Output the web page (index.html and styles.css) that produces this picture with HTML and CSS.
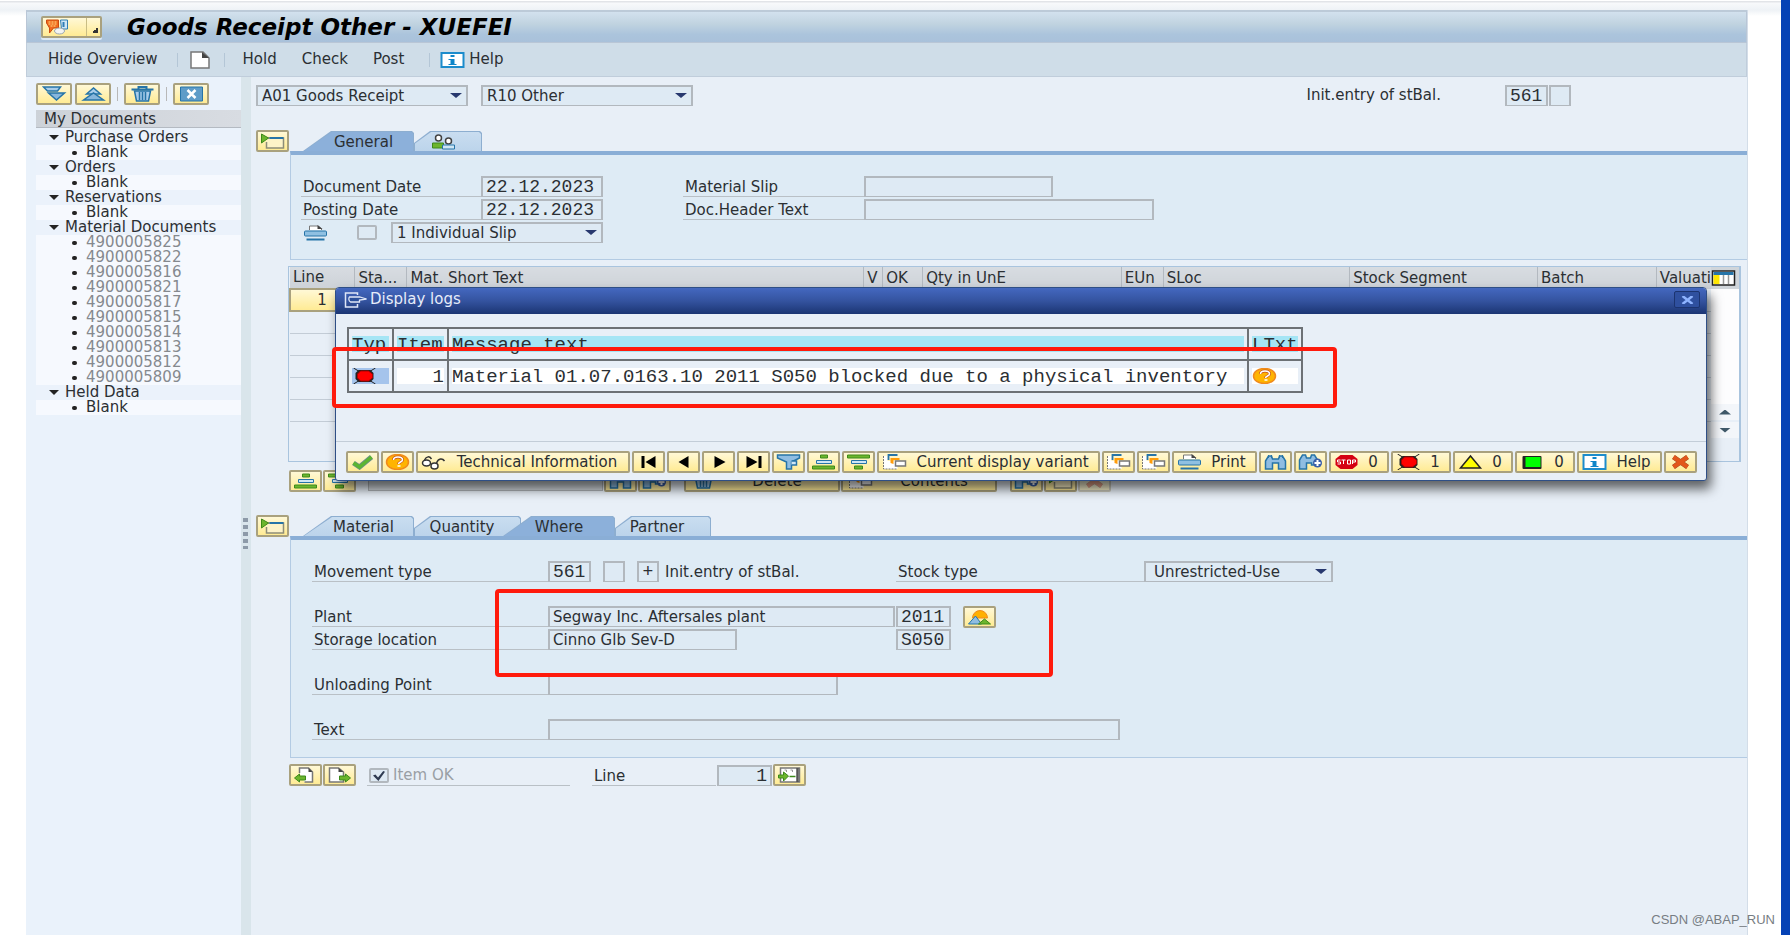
FILE: index.html
```html
<!DOCTYPE html>
<html lang="en">
<head>
    <meta charset="UTF-8">
    <meta name="viewport" content="width=device-width, initial-scale=1.0">
    <title>Goods Receipt Other - XUEFEI</title>
    <link rel="stylesheet" href="styles.css">
</head>
<body>
    <!-- Icon set -->
    <svg class="sprite" aria-hidden="true">
        <symbol id="i-menu" viewBox="0 0 24 16"><path d="M1 1h12v8H8l-4 5V9L1 4z" fill="#f26a1b" stroke="#c94a10"/><path d="M3 3h8M3 5h8M5 7h6" fill="none" stroke="#ffe08a" stroke-dasharray="2 1"/><path d="M15 1h7v9h-6z" fill="#cfe6f5" stroke="#2f7db5"/><path d="M18 3v5" stroke="#2f7db5" stroke-width="2"/><ellipse cx="14" cy="12" rx="5" ry="3" fill="#f3f3f3" stroke="#9aa7b2"/></symbol>
        <symbol id="i-page" viewBox="0 0 20 18"><path d="M1 1h12l6 6v10H1z" fill="#fff" stroke="#777" stroke-width="1.500"/><path d="M12 1l7 6h-7z" fill="#444"/></symbol>
        <symbol id="i-info" viewBox="0 0 24 16"><path d="M1 1h22v14H1z" fill="#fff" stroke="#1c8ccc" stroke-width="2"/><path d="M10 3h4v2h-4zM8 7h6v5h2v1H8v-1h2V8H8z" fill="#0d85c9"/></symbol>
        <symbol id="i-down" viewBox="0 0 24 16"><path d="M1 1h17l-3 4H5z" fill="#a9cdea" stroke="#2674a8" stroke-width="1.500"/><path d="M6 7h16l-8 7z" fill="#86b6dc" stroke="#2674a8" stroke-width="1.500"/></symbol>
        <symbol id="i-up" viewBox="0 0 24 16"><path d="M5 8l7-6 7 6z" fill="#a9cdea" stroke="#2674a8" stroke-width="1.500"/><path d="M2 14l10-7 10 7z" fill="#86b6dc" stroke="#2674a8" stroke-width="1.500"/></symbol>
        <symbol id="i-trash" viewBox="0 0 24 16"><path d="M8 3V1h8v2M1 3.500h22" fill="none" stroke="#2674a8" stroke-width="2"/><path d="M4 5h16l-2 10H6z" fill="#a9cdea" stroke="#2674a8" stroke-width="1.500"/><path d="M9 6v8M12 6v8M15 6v8" stroke="#2674a8" stroke-width="1.500"/></symbol>
        <symbol id="i-closebox" viewBox="0 0 24 16"><path d="M1 1h22v14H1z" fill="#5e9cc8" stroke="#2674a8"/><path d="M8 4l8 8M16 4l-8 8" stroke="#fff" stroke-width="2.500"/></symbol>
        <symbol id="i-detail" viewBox="0 0 24 16"><path d="M7 5h16v10H6V9" fill="#fdf3c8" stroke="#8d8d78" stroke-width="1.500"/><path d="M9 5h14" stroke="#2674a8" stroke-width="2"/><path d="M1 1l7 4-7 5z" fill="#6cb52d" stroke="#3c8a1a"/></symbol>
        <symbol id="i-people" viewBox="0 0 24 16"><circle cx="7" cy="4" r="3" fill="#fff" stroke="#444" stroke-width="1.500"/><path d="M1 14V9h11v5z" fill="#6cb52d" stroke="#3c8a1a"/><circle cx="17" cy="7" r="3" fill="#fff" stroke="#444" stroke-width="1.500"/><path d="M11 15v-4h12v4z" fill="#cfe6f5" stroke="#2674a8"/></symbol>
        <symbol id="i-print" viewBox="0 0 24 16"><path d="M6 5V1h9l3 3v1" fill="#fff" stroke="#777"/><path d="M14 0l5 4h-5z" fill="#444"/><rect x="1" y="6" width="22" height="5" rx="1" fill="#8fc0e2" stroke="#2674a8"/><path d="M3 14.500h18" stroke="#2674a8" stroke-width="2"/></symbol>
        <symbol id="i-check" viewBox="0 0 24 16"><path d="M3 9l6 4L21 3" fill="none" stroke="#6b8f8a" stroke-width="5"/><path d="M3 9l6 4L21 3" fill="none" stroke="#5cb531" stroke-width="3.500"/></symbol>
        <symbol id="i-help" viewBox="0 0 24 16"><ellipse cx="12" cy="8" rx="11" ry="7.500" fill="#ffb400" stroke="#f08a1c" stroke-width="1.500"/><path d="M8 6c0-4 9-4 9 0 0 2-4 2-4 4" fill="none" stroke="#c9541c" stroke-width="3"/><path d="M8 6c0-4 9-4 9 0 0 2-4 2-4 4M12 12h3" fill="none" stroke="#fff" stroke-width="1.500"/></symbol>
        <symbol id="i-glasses" viewBox="0 0 24 16"><ellipse cx="5" cy="9" rx="4" ry="3" fill="#fff" stroke="#333" stroke-width="1.500"/><ellipse cx="13" cy="12" rx="3.500" ry="3" fill="#fff" stroke="#333" stroke-width="1.500"/><path d="M3 6c2-4 5-4 7-1M15 9c2-5 6-5 8-2" fill="none" stroke="#333" stroke-width="1.500"/></symbol>
        <symbol id="i-first" viewBox="0 0 24 16"><path d="M5 2h3v12H5zM19 2v12L9 8z"/></symbol>
        <symbol id="i-prev" viewBox="0 0 24 16"><path d="M17 2v12L7 8z"/></symbol>
        <symbol id="i-next" viewBox="0 0 24 16"><path d="M8 2v12l11-6z"/></symbol>
        <symbol id="i-last" viewBox="0 0 24 16"><path d="M17 2h3v12h-3zM5 2v12l11-6z"/></symbol>
        <symbol id="i-filter" viewBox="0 0 24 16"><path d="M1 1h22v3l-8 4v7h-5V8L1 4z" fill="#8fbde2" stroke="#2674a8" stroke-width="1.500"/><path d="M15 7h5v4h-5" fill="#cfe6f5" stroke="#2674a8" stroke-width="1.500"/></symbol>
        <symbol id="i-asc" viewBox="0 0 24 16"><path d="M9 1h7v3H9z" fill="#6cb52d" stroke="#3c8a1a"/><path d="M5 6.500h15v3H5z" fill="#cfe6f5" stroke="#2674a8"/><path d="M1 12h22v3H1z" fill="#6cb52d" stroke="#3c8a1a"/></symbol>
        <symbol id="i-desc" viewBox="0 0 24 16"><path d="M1 1h22v3H1z" fill="#6cb52d" stroke="#3c8a1a"/><path d="M5 6.500h15v3H5z" fill="#cfe6f5" stroke="#2674a8"/><path d="M8 12h8v3H8z" fill="#6cb52d" stroke="#3c8a1a"/></symbol>
        <symbol id="i-variant" viewBox="0 0 24 16"><path d="M1 2v13h14V7H5V2z" fill="#fff"/><path d="M1 2v13h14" fill="none" stroke="#777" stroke-dasharray="2 1"/><path d="M6 6V1h9" fill="none" stroke="#2674a8" stroke-width="1.800"/><path d="M8 9V4h9v2h-6v4z" fill="#ff9c0a"/><path d="M13 7h10v5H13z" fill="#fff" stroke="#777" stroke-width="1.500"/></symbol>
        <symbol id="i-find" viewBox="0 0 24 16"><path d="M2 15V7l3-5h3l1 3h6l1-3h3l3 5v8h-7V9H9v6z" fill="#8fbde2" stroke="#2674a8" stroke-width="1.500"/><path d="M5 1v3M8 1v3M16 1v3M19 1v3" stroke="#2674a8"/></symbol>
        <symbol id="i-findnext" viewBox="0 0 24 16"><path d="M1 15V6l3-5h3l1 3h4l1-3h3l3 5v5h-6V9H8v6z" fill="#8fbde2" stroke="#2674a8" stroke-width="1.500"/><circle cx="19" cy="9" r="4.500" fill="#3b5fa8"/><path d="M19 6v6M16 9h6" stroke="#fff" stroke-width="2"/></symbol>
        <symbol id="i-stop" viewBox="0 0 24 16"><path d="M6 1h12l5 4v6l-5 4H6l-5-4V5z" fill="#d50012"/><path d="M6 6H3v2h3v2H3M7 6h4M9 6v4M13 6h3v4h-3zM18 10V6h3v2h-3" fill="none" stroke="#fff"/></symbol>
        <symbol id="i-error" viewBox="0 0 24 16"><path d="M1 0l5 3M23 0l-5 3M1 16l5-3M23 16l-5-3" stroke="#222"/><path d="M6 2h12l3 3v6l-3 3H6l-3-3V5z" fill="#222"/><path d="M8 3h8l4 3v4l-4 3H8l-3-3V6z" fill="#f00" stroke="#a00"/></symbol>
        <symbol id="i-warn" viewBox="0 0 24 16"><path d="M12 2l10 12H2z" fill="#ff0" stroke="#222" stroke-width="1.500"/></symbol>
        <symbol id="i-ok" viewBox="0 0 24 16"><rect x="2" y="2" width="19" height="13" rx="1" fill="#222"/><path d="M5 3h15v10H5z" fill="#0f0"/></symbol>
        <symbol id="i-cancel" viewBox="0 0 24 16"><path d="M5 3l14 10M19 3L5 13" stroke="#9a4a28" stroke-width="5"/><path d="M5 3l14 10M19 3L5 13" stroke="#e2561b" stroke-width="4"/></symbol>
        <symbol id="i-exit" viewBox="0 0 24 16"><path d="M14 3V1H2v14h12v-3" fill="none" stroke="#dfe6f7" stroke-width="1.500"/><path d="M6 5h10l7 2-7 1v2H7c-2-1-2-4-1-5z" fill="#2b4f9b" stroke="#dfe6f7" stroke-width="1.300"/></symbol>
        <symbol id="i-columns" viewBox="0 0 24 16"><path d="M1 1h22v14H1z" fill="#fff" stroke="#222" stroke-width="1.500"/><path d="M2 2h20v3H2z" fill="#2674a8"/><path d="M2 5h6v9H2z" fill="#ffe600"/><path d="M12 5v9M17 5v9" stroke="#999" stroke-width="1.500"/></symbol>
        <symbol id="i-plant" viewBox="0 0 24 16"><path d="M5 9a7 7 0 0 1 15 0z" fill="#ffb000" stroke="#f08a1c"/><path d="M1 15l7-8 6 8z" fill="#8fbde2" stroke="#2674a8"/><path d="M11 15l6-5 6 5z" fill="#6cb52d" stroke="#3c8a1a"/></symbol>
        <symbol id="i-pageprev" viewBox="0 0 24 16"><path d="M6 6V1h9l4 4v10h-8" fill="#fff" stroke="#777" stroke-width="1.500"/><path d="M15 1l4 4h-4z" fill="#444"/><path d="M1 11l5-4v2h6v4H6v2z" fill="#6cb52d" stroke="#3c8a1a"/></symbol>
        <symbol id="i-pagenext" viewBox="0 0 24 16"><path d="M2 1h9l5 4v10H2z" fill="#fff" stroke="#777" stroke-width="1.500"/><path d="M11 1l5 4h-5z" fill="#444"/><path d="M23 11l-5-4v2h-6v4h6v2z" fill="#6cb52d" stroke="#3c8a1a"/></symbol>
        <symbol id="i-goto" viewBox="0 0 24 16"><path d="M3 1h19v14H3z" fill="#fff" stroke="#777" stroke-width="1.500"/><path d="M20 1v14" stroke="#555" stroke-width="2.500"/><path d="M7 3h2v2M13 3h2v2" fill="none" stroke="#999"/><path d="M12 9.500h6" stroke="#3c8a1a" stroke-width="1.500"/><path d="M1 8h5V5l5 4-5 5v-3H1z" fill="#6cb52d" stroke="#3c8a1a"/></symbol>
    </svg>

    <div class="page">
        <main class="window">
            <header class="titlebar">
                <button class="btn menu-btn" aria-label="Menu"><svg class="ico"><use href="#i-menu"/></svg><span class="corner"></span></button>
                <h1>Goods Receipt Other - XUEFEI</h1>
            </header>

            <nav class="menubar">
                <button class="menu-item">Hide Overview</button>
                <span class="sep"></span>
                <button class="menu-item new" aria-label="New"><svg class="ico-page"><use href="#i-page"/></svg></button>
                <span class="sep"></span>
                <button class="menu-item hold">Hold</button>
                <button class="menu-item">Check</button>
                <button class="menu-item">Post</button>
                <span class="sep"></span>
                <button class="menu-item help"><svg class="ico"><use href="#i-info"/></svg>Help</button>
            </nav>

            <div class="workspace">
                <!-- Document tree -->
                <aside class="overview">
                    <div class="tree-tools">
                        <button class="btn" aria-label="Expand"><svg class="ico"><use href="#i-down"/></svg></button>
                        <button class="btn" aria-label="Collapse"><svg class="ico"><use href="#i-up"/></svg></button>
                        <span class="sep"></span>
                        <button class="btn" aria-label="Delete"><svg class="ico"><use href="#i-trash"/></svg></button>
                        <span class="sep"></span>
                        <button class="btn" aria-label="Close"><svg class="ico"><use href="#i-closebox"/></svg></button>
                    </div>
                    <h2>My Documents</h2>
                    <ul class="tree">
                        <li class="node">Purchase Orders</li>
                        <li>Blank</li>
                        <li class="node">Orders</li>
                        <li>Blank</li>
                        <li class="node">Reservations</li>
                        <li>Blank</li>
                        <li class="node">Material Documents</li>
                        <li class="doc">4900005825</li>
                        <li class="doc">4900005822</li>
                        <li class="doc">4900005816</li>
                        <li class="doc">4900005821</li>
                        <li class="doc">4900005817</li>
                        <li class="doc">4900005815</li>
                        <li class="doc">4900005814</li>
                        <li class="doc">4900005813</li>
                        <li class="doc">4900005812</li>
                        <li class="doc">4900005809</li>
                        <li class="node">Held Data</li>
                        <li>Blank</li>
                    </ul>
                </aside>
                <div class="splitter"><span class="grip"></span></div>

                <section class="content">
                    <div class="top-row">
                        <span class="drop"><select aria-label="Action"><option>A01 Goods Receipt</option></select></span>
                        <span class="drop"><select aria-label="Reference"><option>R10 Other</option></select></span>
                        <div class="mvt">
                            <label for="mvt">Init.entry of stBal.</label>
                            <input id="mvt" class="w3" value="561">
                            <input class="w1" aria-label="Special stock">
                        </div>
                    </div>

                    <div class="tab-row">
                        <button class="btn" aria-label="Close header data"><svg class="ico"><use href="#i-detail"/></svg></button>
                        <div class="tabs">
                            <button class="tab first active">General</button>
                            <button class="tab icon-tab" aria-label="Partner info"><svg class="ico"><use href="#i-people"/></svg></button>
                        </div>
                    </div>
                    <div class="panel head-panel">
                        <label class="lbl" for="docdate">Document Date</label>
                        <input id="docdate" value="22.12.2023">
                        <label class="lbl second" for="slip">Material Slip</label>
                        <input id="slip" class="w-slip">
                        <label class="lbl" for="postdate">Posting Date</label>
                        <input id="postdate" value="22.12.2023">
                        <label class="lbl second" for="headtext">Doc.Header Text</label>
                        <input id="headtext" class="w-head">
                        <div class="print-row">
                            <svg class="ico"><use href="#i-print"/></svg>
                            <input type="checkbox" aria-label="Print slip">
                            <span class="drop"><select aria-label="Slip type"><option>1 Individual Slip</option></select></span>
                        </div>
                    </div>

                    <div class="items">
                        <table class="item-table">
                            <colgroup>
                                <col class="c-line"><col class="c-sta"><col class="c-mat"><col class="c-v"><col class="c-ok"><col class="c-qty"><col class="c-eun"><col class="c-sloc"><col class="c-seg"><col class="c-batch"><col>
                            </colgroup>
                            <thead>
                                <tr><th>Line</th><th>Sta...</th><th>Mat. Short Text</th><th>V</th><th>OK</th><th>Qty in UnE</th><th>EUn</th><th>SLoc</th><th>Stock Segment</th><th>Batch</th><th>Valuati</th></tr>
                            </thead>
                            <tbody>
                                <tr><td class="current">1</td><td></td><td></td><td></td><td></td><td></td><td></td><td></td><td></td><td></td><td></td></tr>
                                <tr><td colspan="11"></td></tr>
                                <tr><td colspan="11"></td></tr>
                                <tr><td colspan="11"></td></tr>
                                <tr><td colspan="11"></td></tr>
                                <tr><td colspan="11"></td></tr>
                            </tbody>
                        </table>
                        <div class="scroller">
                            <button class="cfg" aria-label="Configure columns"><svg class="ico"><use href="#i-columns"/></svg></button>
                            <div class="track"></div>
                            <button class="arrow up" aria-label="Scroll up"></button>
                            <button class="arrow down" aria-label="Scroll down"></button>
                        </div>
                    </div>

                    <div class="item-tools">
                        <button class="btn" aria-label="Sort ascending"><svg class="ico"><use href="#i-asc"/></svg></button>
                        <button class="btn" aria-label="Sort descending"><svg class="ico"><use href="#i-desc"/></svg></button>
                        <div class="hscroll"></div>
                        <button class="btn" aria-label="Find"><svg class="ico"><use href="#i-find"/></svg></button>
                        <button class="btn" aria-label="Find next"><svg class="ico"><use href="#i-findnext"/></svg></button>
                        <button class="btn wide group"><svg class="ico"><use href="#i-trash"/></svg><span>Delete</span></button>
                        <button class="btn wide"><svg class="ico"><use href="#i-variant"/></svg><span>Contents</span></button>
                        <button class="btn group" aria-label="Distribute"><svg class="ico"><use href="#i-findnext"/></svg></button>
                        <button class="btn" aria-label="Split"><svg class="ico"><use href="#i-detail"/></svg></button>
                        <button class="btn" aria-label="Batch" disabled><svg class="ico"><use href="#i-cancel"/></svg></button>
                    </div>

                    <div class="tab-row lower">
                        <button class="btn" aria-label="Close item detail"><svg class="ico"><use href="#i-detail"/></svg></button>
                        <div class="tabs">
                            <button class="tab first">Material</button>
                            <button class="tab quantity">Quantity</button>
                            <button class="tab where active">Where</button>
                            <button class="tab partner">Partner</button>
                        </div>
                    </div>
                    <div class="panel detail-panel">
                        <label class="lbl" for="mtype">Movement type</label>
                        <div class="cell spaced"><input id="mtype" class="w3" value="561"><input class="w1" aria-label="Special stock indicator"><input class="w1 plus" aria-label="Sign" value="+"><span class="mtext">Init.entry of stBal.</span></div>
                        <label class="lbl" for="stock">Stock type</label>
                        <span class="drop stock"><select id="stock"><option>Unrestricted-Use</option></select></span>

                        <label class="lbl r3" for="plant">Plant</label>
                        <div class="cell r3"><input id="plant" class="text w-plant" value="Segway Inc. Aftersales plant"></div>
                        <div class="cell r3"><input class="w4" aria-label="Plant code" value="2011"><button class="btn plant-btn" aria-label="Plant details"><svg class="ico"><use href="#i-plant"/></svg></button></div>

                        <label class="lbl r4" for="sloc">Storage location</label>
                        <div class="cell r4"><input id="sloc" class="text w-slip" value="Cinno Glb Sev-D"></div>
                        <div class="cell r4"><input class="w4" aria-label="Storage location code" value="S050"></div>

                        <label class="lbl r5" for="unload">Unloading Point</label>
                        <div class="cell r5"><input id="unload" class="w-head"></div>

                        <label class="lbl r6" for="text">Text</label>
                        <div class="cell long r6"><input id="text" class="w-text"></div>
                        <div class="mark mark-plant"></div>
                    </div>

                    <div class="line-bar">
                        <button class="btn" aria-label="Previous item"><svg class="ico"><use href="#i-pageprev"/></svg></button>
                        <button class="btn" aria-label="Next item"><svg class="ico"><use href="#i-pagenext"/></svg></button>
                        <label class="lbl item-ok"><input type="checkbox" checked disabled>Item OK</label>
                        <label class="lbl line-lbl" for="line">Line</label>
                        <input id="line" class="w4 num" value="1">
                        <button class="btn" aria-label="Go to line"><svg class="ico"><use href="#i-goto"/></svg></button>
                    </div>
                </section>
            </div>

            <!-- Log popup -->
            <section class="dialog" role="dialog" aria-labelledby="dlg-title">
                <header class="dialog-title">
                    <svg class="ico"><use href="#i-exit"/></svg>
                    <h2 id="dlg-title">Display logs</h2>
                    <button class="dialog-close" aria-label="Close"><svg viewBox="0 0 12 8"><path d="M1 0l10 8M11 0L1 8" stroke="#8fb4ff" stroke-width="2.500"/></svg></button>
                </header>
                <div class="dialog-body">
                    <table class="log">
                        <colgroup><col class="l-typ"><col class="l-item"><col class="l-msg"><col class="l-txt"></colgroup>
                        <thead>
                            <tr><th><span>Typ</span></th><th><span>Item</span></th><th><span>Message text</span></th><th><span>LTxt</span></th></tr>
                        </thead>
                        <tbody>
                            <tr>
                                <td><span class="err"><svg class="ico"><use href="#i-error"/></svg></span></td>
                                <td class="num"><span>1</span></td>
                                <td><span>Material 01.07.0163.10 2011 S050 blocked due to a physical inventory</span></td>
                                <td><span><svg class="ico"><use href="#i-help"/></svg></span></td>
                            </tr>
                        </tbody>
                    </table>
                </div>
                <footer class="dialog-tools">
                    <button class="btn" aria-label="Continue"><svg class="ico"><use href="#i-check"/></svg></button>
                    <button class="btn" aria-label="Long text"><svg class="ico"><use href="#i-help"/></svg></button>
                    <button class="btn tech"><svg class="ico"><use href="#i-glasses"/></svg><span>Technical Information</span></button>
                    <button class="btn" aria-label="First"><svg class="ico"><use href="#i-first"/></svg></button>
                    <button class="btn" aria-label="Previous"><svg class="ico"><use href="#i-prev"/></svg></button>
                    <button class="btn" aria-label="Next"><svg class="ico"><use href="#i-next"/></svg></button>
                    <button class="btn" aria-label="Last"><svg class="ico"><use href="#i-last"/></svg></button>
                    <button class="btn" aria-label="Filter"><svg class="ico"><use href="#i-filter"/></svg></button>
                    <button class="btn" aria-label="Sort ascending"><svg class="ico"><use href="#i-asc"/></svg></button>
                    <button class="btn" aria-label="Sort descending"><svg class="ico"><use href="#i-desc"/></svg></button>
                    <button class="btn variant"><svg class="ico"><use href="#i-variant"/></svg><span>Current display variant</span></button>
                    <button class="btn" aria-label="Select variant"><svg class="ico"><use href="#i-variant"/></svg></button>
                    <button class="btn" aria-label="Save variant"><svg class="ico"><use href="#i-variant"/></svg></button>
                    <button class="btn labelled"><svg class="ico"><use href="#i-print"/></svg><span>Print</span></button>
                    <button class="btn" aria-label="Find"><svg class="ico"><use href="#i-find"/></svg></button>
                    <button class="btn" aria-label="Find next"><svg class="ico"><use href="#i-findnext"/></svg></button>
                    <button class="btn count"><svg class="ico"><use href="#i-stop"/></svg><span>0</span></button>
                    <button class="btn count"><svg class="ico"><use href="#i-error"/></svg><span>1</span></button>
                    <button class="btn count"><svg class="ico"><use href="#i-warn"/></svg><span>0</span></button>
                    <button class="btn count"><svg class="ico"><use href="#i-ok"/></svg><span>0</span></button>
                    <button class="btn labelled"><svg class="ico"><use href="#i-info"/></svg><span>Help</span></button>
                    <button class="btn" aria-label="Cancel"><svg class="ico"><use href="#i-cancel"/></svg></button>
                </footer>
                <div class="mark mark-log"></div>
            </section>
        </main>
        <div class="watermark">CSDN @ABAP_RUN</div>
    </div>
</body>
</html>
```
FILE: styles.css
```css
* {
    box-sizing: border-box;
}

body {
    margin: 0;
    background: #fff;
    font-family: "DejaVu Sans", Verdana, sans-serif;
    font-size: 15px;
    line-height: 15px;
    color: #2b2f33;
}

h1, h2, ul {
    margin: 0;
    padding: 0;
    font-size: 15px;
    font-weight: normal;
}

button, input, select {
    font: inherit;
    color: inherit;
    margin: 0;
}

.sprite {
    display: none;
}

.page {
    position: relative;
    display: flex;
    min-height: 100vh;
    padding: 10px 33px 0 26px;
    border-right: 9px solid #0542b5;
    background: linear-gradient(#fff 1px, #e2e4e8 1px, #e2e4e8 2px, #f8f9fb 3px, #eef2f6 10px, #fff 16px);
}

.window {
    position: relative;
    flex: 1;
    display: flex;
    flex-direction: column;
    background: #e8eff7;
    border-right: 1px solid #d3dde8;
    min-width: 0;
}

/* Yellow push buttons */
.btn {
    display: flex;
    align-items: center;
    justify-content: center;
    flex: none;
    width: 33px;
    height: 22px;
    padding: 0;
    border: 2px solid #a9a17e;
    border-radius: 2px;
    background: linear-gradient(#fff8d6, #ffeb94);
    white-space: nowrap;
}

.btn:disabled {
    opacity: 0.5;
}

.ico {
    width: 25px;
    height: 16px;
    flex: none;
}

.sep {
    width: 1px;
    height: 14px;
    background: #b4c6d6;
}

/* Title and menu */
.titlebar {
    display: flex;
    align-items: center;
    height: 33px;
    padding-left: 14px;
    border: 1px solid #b9c6d6;
    border-top: 2px solid #bccad8;
    background: linear-gradient(#d2e1ee, #c0d3e0 40%, #abc4dc 75%, #a9c1da);
}

.menu-btn {
    position: relative;
    width: 61px;
    justify-content: flex-start;
    padding-left: 2px;
    box-shadow: 0 2px 0 #dce8f2;
}

.menu-btn .corner {
    margin-left: auto;
    width: 14px;
    height: 18px;
    border-left: 1px solid #c9bd84;
    background: linear-gradient(135deg, transparent 50%, #333 50%) 4px 10px / 7px 5px no-repeat;
}

.titlebar h1 {
    margin-left: 25px;
    font-size: 23px;
    line-height: 26px;
    font-weight: bold;
    font-style: italic;
    color: #000;
}

.menubar {
    display: flex;
    align-items: center;
    height: 34px;
    padding-left: 21px;
    border: 1px solid #c0cddb;
    border-top: 0;
    background: #cfdde8;
}

.menu-item {
    display: flex;
    align-items: center;
    padding: 0;
    margin-right: 25px;
    border: 0;
    background: none;
}

.menu-item:first-child {
    margin-right: 19px;
}

.menu-item.new {
    margin: 0 14px 0 12px;
}

.menu-item.hold {
    margin-left: 18px;
}

.menu-item.help {
    gap: 4px;
    margin-left: 10px;
}

.ico-page {
    width: 20px;
    height: 18px;
}

.workspace {
    display: flex;
    flex: 1;
}

/* Overview tree */
.overview {
    width: 215px;
    padding: 6px 0 0 10px;
    background: #eaf2fb;
}

.tree-tools {
    display: flex;
    align-items: center;
    gap: 3px;
    margin-bottom: 5px;
}

.tree-tools .btn {
    width: 36px;
}

.tree-tools .sep {
    margin: 0 3px;
    background: #b8b8b8;
}

.overview h2 {
    height: 18px;
    padding: 2px 8px;
    border-bottom: 1px solid #b4bac2;
    background: linear-gradient(to right, #cdd2d8, #d8dce2);
}

.tree {
    list-style: none;
    padding-top: 2px;
}

.tree li {
    height: 15px;
    padding-left: 36px;
    display: flex;
    align-items: center;
    gap: 11px;
    background: #f6f9fe;
}

.tree li::before {
    content: "";
    width: 5px;
    height: 4px;
    margin-right: -2px;
    border-radius: 2px;
    background: #222;
}

.tree .node {
    padding-left: 13px;
    gap: 8px;
    background: #ebf2fb;
}

.tree .node::before {
    width: 10px;
    height: 5px;
    border-radius: 0;
    clip-path: polygon(0 0, 100% 0, 50% 100%);
}

.tree .doc {
    color: #85898e;
}

.splitter {
    width: 10px;
    padding: 441px 2px 0;
    background: #d9e5eb;
}

.grip {
    display: block;
    width: 5px;
    height: 31px;
    background: repeating-linear-gradient(#8d9aa8 0 4px, transparent 4px 7px);
}

/* Work area */
.content {
    flex: 1;
    min-width: 0;
    padding: 8px 0 0 5px;
}

input {
    height: 21px;
    padding: 0 3px;
    border: 2px solid #b2b8be;
    border-bottom-width: 1px;
    border-radius: 0;
    background: #deeaf4;
    font-family: "Liberation Mono", monospace;
    font-size: 18px;
    line-height: 18px;
    min-width: 0;
}

input.text {
    font-family: inherit;
    font-size: 15px;
}

.w1 { width: 22px; }
.w3 { width: 43px; }
.w4 { width: 55px; }
.w-slip { width: 189px; }
.w-head { width: 290px; }
.w-plant { width: 347px; }
.w-text { width: 572px; }

.num {
    text-align: right;
}

input[type="checkbox"] {
    appearance: none;
    flex: none;
    width: 20px;
    height: 15px;
    padding: 0;
    border: 2px solid #b2b8be;
    border-radius: 2px;
}

.drop {
    position: relative;
    display: block;
    width: 212px;
    height: 21px;
}

.drop select {
    appearance: none;
    width: 100%;
    height: 21px;
    padding: 0 4px;
    border: 2px solid #b2b8be;
    border-bottom-width: 1px;
    border-radius: 0;
    background: #deeaf4;
}

.drop::after {
    content: "";
    position: absolute;
    right: 6px;
    top: 8px;
    width: 12px;
    height: 5px;
    background: #27386e;
    clip-path: polygon(0 0, 100% 0, 50% 100%);
    pointer-events: none;
}

.top-row {
    display: flex;
    gap: 13px;
    margin-bottom: 24px;
}

.mvt {
    display: flex;
    align-items: center;
    gap: 1px;
    margin-left: auto;
    margin-right: 176px;
}

.mvt label {
    margin-right: 63px;
}

/* Tabs */
.tab-row {
    display: flex;
    height: 21px;
}

.tab-row.lower {
    margin-top: 23px;
}

.tabs {
    display: flex;
    align-items: flex-end;
    margin-left: 14px;
}

.tab {
    position: relative;
    isolation: isolate;
    height: 20px;
    padding: 2px 0 0;
    border: 0;
    background: #8daed0;
    clip-path: polygon(16px 0, calc(100% - 2px) 0, 100% 2px, 100% 100%, 0 100%, 0 60%);
}

.tab::before {
    content: "";
    position: absolute;
    inset: 1px 1px 0 1px;
    z-index: -1;
    background: linear-gradient(#c9ddf0, #bcd4eb);
    clip-path: inherit;
}

.tab.active::before {
    background: #8cb0da;
}

.tab.first {
    width: 111px;
    padding-left: 10px;
    clip-path: polygon(28px 0, calc(100% - 2px) 0, 100% 2px, 100% 100%, 0 100%);
}

.tab.icon-tab {
    width: 68px;
}

.tab.icon-tab .ico {
    display: block;
    margin: 0 auto 0 17px;
}

.tab.quantity {
    width: 107px;
    padding-right: 11px;
}

.tab.where {
    width: 112px;
    margin-left: -18px;
    clip-path: polygon(28px 0, calc(100% - 2px) 0, 100% 2px, 100% 100%, 0 100%);
}

.tab.partner {
    width: 96px;
    padding-right: 12px;
}

.panel {
    position: relative;
    display: grid;
    margin-left: 34px;
    border: 1px solid #b3cbe3;
    border-top: 4px solid #8aaed6;
    border-right: 0;
    background: #deebf5;
}

.lbl {
    height: 21px;
    padding: 4px 0 0 2px;
    border-bottom: 1px solid #b9c0c6;
}

.head-panel {
    grid-template-columns: 180px 122px 80px 181px 1fr;
    row-gap: 2px;
    padding: 21px 0 16px 10px;
}

.head-panel .second {
    grid-column: 4;
}

.print-row {
    grid-column: 1 / 3;
    display: flex;
    align-items: center;
}

.print-row .ico {
    margin-left: 2px;
}

.print-row input {
    margin-left: 29px;
}

.print-row .drop {
    margin-left: auto;
}

/* Item list */
.items {
    display: flex;
    margin: 6px 6px 0 32px;
    height: 196px;
    border: 1px solid #a9c4de;
    border-right-width: 2px;
    background: #e8eff7;
}

.item-table {
    flex: 1;
    align-self: flex-start;
    table-layout: fixed;
    border-collapse: collapse;
}

.item-table th {
    height: 22px;
    padding: 0 0 0 3px;
    border-left: 1px solid #b3b9c0;
    background: linear-gradient(#d8dce1, #cdd2d8);
    font-weight: normal;
    text-align: left;
    white-space: nowrap;
}

.item-table th:first-child {
    border-left: 0;
}

.item-table td {
    height: 22px;
    padding: 0;
    border-bottom: 1px solid #c3ccd6;
}

.item-table .current {
    padding-right: 27px;
    border: 2px solid #a9a17e;
    background: linear-gradient(#fff8d6, #ffeb94);
    text-align: right;
}

.c-line { width: 65px; }
.c-sta { width: 52px; }
.c-mat { width: 458px; }
.c-v { width: 19px; }
.c-ok { width: 40px; }
.c-qty { width: 199px; }
.c-eun { width: 42px; }
.c-sloc { width: 187px; }
.c-seg { width: 188px; }
.c-batch { width: 119px; }

.scroller {
    width: 28px;
    display: flex;
    flex-direction: column;
}

.cfg {
    height: 22px;
    padding: 0;
    border: 0;
    background: #d0d5da;
}

.cfg .ico {
    display: block;
}

.track {
    height: 115px;
    background: #fdfdfe;
}

.arrow {
    height: 18px;
    border: 0;
    border-bottom: 2px solid #e8eff7;
    background: #f3f6fa;
    display: flex;
    align-items: center;
    justify-content: center;
}

.arrow::before {
    content: "";
    width: 12px;
    height: 5px;
    background: #3f5868;
    clip-path: polygon(0 0, 100% 0, 50% 100%);
}

.arrow.up::before {
    clip-path: polygon(50% 0, 100% 100%, 0 100%);
}

.item-tools {
    display: flex;
    gap: 1px;
    margin: 8px 0 0 33px;
}

.hscroll {
    width: 235px;
    height: 21px;
    margin-left: 11px;
    border: 1px solid #b0b4b8;
    background: #d2d7dc;
}

.item-tools .wide {
    width: 156px;
    justify-content: flex-start;
    padding-left: 5px;
}

.item-tools .wide span {
    flex: 1;
    text-align: center;
}

.item-tools .group {
    margin-left: 12px;
}

/* Item detail */
.detail-panel {
    grid-template-columns: 236px 348px 248px 189px;
    grid-template-rows: 45px 23px 45px 45px 21px;
    padding: 21px 0 17px 21px;
}

.cell {
    display: flex;
    height: 21px;
}

.cell.long {
    grid-column: 2 / 4;
}

.spaced {
    gap: 12px;
}

.cell .plus {
    padding: 0;
    text-align: center;
}

.mtext {
    margin-left: -6px;
    padding-top: 4px;
    white-space: nowrap;
}

.drop.stock {
    width: 189px;
}

.drop.stock select {
    padding-left: 8px;
}

.r3 { grid-row: 2; }
.r4 { grid-row: 3; }
.r5 { grid-row: 4; }
.r6 { grid-row: 5; }

.plant-btn {
    margin-left: 12px;
}

.line-bar {
    display: flex;
    align-items: center;
    gap: 1px;
    margin: 6px 0 0 33px;
}

.item-ok {
    display: flex;
    align-items: center;
    gap: 4px;
    width: 203px;
    margin-left: 10px;
    padding-top: 2px;
    color: #9a9fa5;
}

.item-ok input:checked::before {
    content: "";
    display: block;
    width: 12px;
    height: 10px;
    margin: 1px 2px;
    background: #2f3b52;
    clip-path: polygon(0 45%, 20% 35%, 42% 65%, 85% 0, 100% 8%, 45% 100%);
}

.line-lbl {
    width: 124px;
    margin-left: 21px;
}

/* Log popup lies over the item list */
.dialog {
    position: absolute;
    top: 277px;
    left: 309px;
    right: 40px;
    border: 1px solid #2f4f86;
    border-radius: 4px 4px 3px 3px;
    background: #e8eff7;
    box-shadow: 4px 8px 12px rgba(0, 0, 0, 0.6);
}

.dialog-title {
    display: flex;
    align-items: center;
    gap: 2px;
    height: 26px;
    padding: 0 6px 3px 7px;
    border-radius: 3px 3px 0 0;
    background: linear-gradient(#4468c0, #34539f 50%, #1b3573);
    color: #e6ecfa;
}

.dialog-close {
    display: flex;
    align-items: center;
    justify-content: center;
    width: 26px;
    height: 17px;
    margin-left: auto;
    padding: 0;
    border: 1px solid #1c3470;
    border-radius: 2px;
    background: #2f509f;
}

.dialog-close svg {
    width: 13px;
    height: 8px;
}

.dialog-body {
    height: 128px;
    padding: 13px 12px 0 11px;
    border-bottom: 1px solid #c3cdd8;
}

.log {
    width: 956px;
    table-layout: fixed;
    border-collapse: collapse;
    font-family: "Liberation Mono", monospace;
    font-size: 19px;
    line-height: 18px;
}

.log th, .log td {
    height: 32px;
    padding: 0 3px;
    border: 2px solid #6d7175;
    font-weight: normal;
    text-align: left;
    white-space: nowrap;
}

.log span {
    display: block;
    height: 16px;
    background: #fff;
}

.log th span {
    background: #a5e5f5;
}

.log .err {
    background: #a5c4ec;
}

.log td.num {
    text-align: right;
}

.log .ico {
    display: block;
}

.l-typ { width: 45px; }
.l-item { width: 55px; }
.l-msg { width: 800px; }

.dialog-tools {
    display: flex;
    gap: 2px;
    padding: 9px 8px 7px 10px;
}

.dialog-tools .btn:not(:last-child) {
    flex-shrink: 1;
}

.dialog-tools .tech { width: 214px; }
.dialog-tools .variant { width: 223px; }
.dialog-tools .labelled { width: 85px; }
.dialog-tools .count { width: 60px; }

.dialog-tools .tech,
.dialog-tools .variant,
.dialog-tools .labelled,
.dialog-tools .count {
    justify-content: flex-start;
    padding-left: 3px;
}

.dialog-tools .btn span {
    flex: 1;
    text-align: center;
}

/* Red highlight frames */
.mark {
    position: absolute;
    border: 4px solid #ff1a0c;
    border-radius: 4px;
    pointer-events: none;
}

.mark-log {
    top: 59px;
    left: -4px;
    width: 1005px;
    height: 61px;
}

.mark-plant {
    top: 49px;
    left: 204px;
    width: 558px;
    height: 88px;
}

.watermark {
    position: absolute;
    right: 6px;
    bottom: 8px;
    font-family: "Liberation Sans", Arial, sans-serif;
    font-size: 13px;
    color: #777d83;
}
```
